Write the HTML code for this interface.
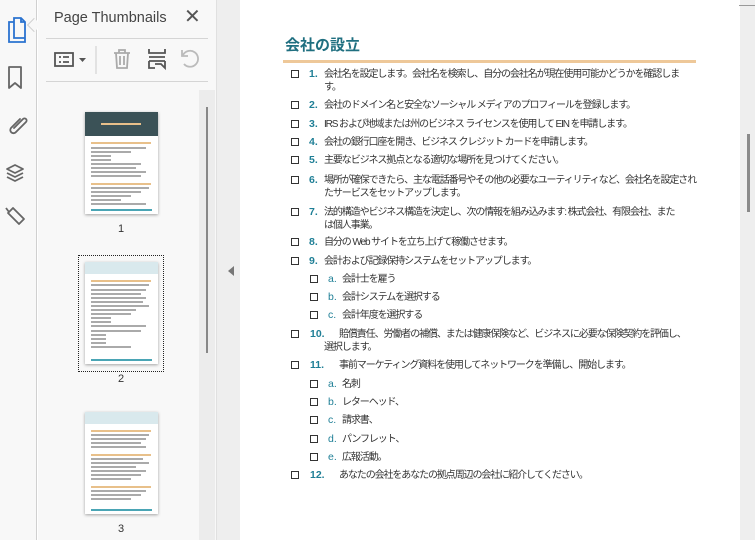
<!DOCTYPE html>
<html><head><meta charset="utf-8"><style>
*{margin:0;padding:0;box-sizing:border-box}
body{width:755px;height:540px;overflow:hidden;background:#fff;font-family:"Liberation Sans","Noto Sans CJK JP",sans-serif;position:relative}
.abs{position:absolute}
.bar{left:0;top:0;width:37px;height:540px;background:#f8f8f8;border-right:1px solid #d0d0d0}
.panel{left:38px;top:0;width:178px;height:540px;background:#f8f8f8}
.gap{left:216px;top:0;width:24px;height:540px;background:#eeeeee;border-left:1px solid #e0e0e0}
.rs{left:740px;top:0;width:15px;height:540px;background:#eeeeee}
.t{position:absolute;font-size:10px;letter-spacing:-1.1px;color:#333;white-space:nowrap;line-height:13px}
.n{position:absolute;font-size:10.5px;color:#1f7f96;font-weight:bold;line-height:13px}
.l{position:absolute;font-size:10.5px;color:#1f7f96;line-height:13px}
.b{position:absolute;width:8px;height:8px;border:1.5px solid #333}
.th{position:absolute;left:85px;width:73px;height:102px;background:#fff;box-shadow:0 1px 3px rgba(0,0,0,.35)}
.th i{position:absolute;left:6px;height:1.5px;background:#aaa}
</style></head><body>
<div class="abs bar"></div>
<div class="abs panel"></div>
<div class="abs gap"></div>
<div class="abs rs"></div>
<div class="abs" style="left:747px;top:134px;width:3px;height:78px;background:#8a8a8a"></div>
<div class="abs" style="left:739px;top:5px;width:16px;height:1px;background:#999"></div>

<svg class="abs" style="left:0;top:0" width="37" height="250" viewBox="0 0 37 250" fill="none" stroke-width="1.8">
<path d="M9 22h5v16h11v4H9z M14 18h7l4 4v16H14z" stroke="#2b73d0" fill="none"/>
<path d="M21 18v4h4" stroke="#2b73d0"/>
<path d="M9 67V88l6-5 6 5V67z" stroke="#666" stroke-linejoin="round"/>
<path d="M20 119l-9 9a3 3 0 0 0 5 4l10-10a2 2 0 0 0-3-3l-9 9" stroke="#666" stroke-linecap="round"/>
<path d="M15 165l-8 4 8 4 8-4z M7 173l8 4 8-4 M7 177l8 4 8-4" stroke="#666" stroke-linejoin="round"/>
<path d="M9 212l4-4 11 11-5 5-11-11z M6 208l3 4" stroke="#666" stroke-linejoin="round"/>
</svg>
<div class="abs" style="left:29px;top:20px;width:10px;height:10px;background:#f8f8f8;border-left:1px solid #d0d0d0;border-bottom:1px solid #d0d0d0;transform:rotate(45deg)"></div>

<div class="abs" style="left:54px;top:9px;font-size:14.5px;color:#444;line-height:18px;white-space:nowrap">Page Thumbnails</div>
<div class="abs" style="left:184px;top:6px;font-size:20px;color:#555;line-height:22px">✕</div>
<div class="abs" style="left:46px;top:38px;width:162px;height:1px;background:#d5d5d5"></div>
<div class="abs" style="left:46px;top:81px;width:162px;height:1px;background:#d5d5d5"></div>
<svg class="abs" style="left:50px;top:45px" width="160" height="30" fill="none" stroke-width="1.8">
<rect x="5" y="8" width="18" height="13" stroke="#555"/>
<path d="M9 12h2M9 17h2M13 12h6M13 17h6" stroke="#555"/>
<path d="M29 13h7l-3.5 4z" fill="#555"/>
<path d="M46 1v28" stroke="#ccc" stroke-width="1"/>
<path d="M64 8h16M69 8V5h6v3M66 8l1 15h10l1-15M70 11v9M74 11v9" stroke="#aaa"/>
<path d="M99 4v4h16V4M99 12h16M99 16h16M99 16v7h6M115 16v7l-4-4h-6" stroke="#555"/>
<path d="M134 19a8 8 0 1 0-1-9M132 5v6h6" stroke="#bbb"/>
</svg>
<div class="abs" style="left:199px;top:90px;width:16px;height:450px;background:#ececec"></div>
<div class="abs" style="left:206px;top:107px;width:2px;height:246px;background:#888"></div>
<svg class="abs" style="left:226px;top:265px" width="10" height="12"><path d="M8 1v10L2 6z" fill="#777"/></svg>

<div class="th" style="top:112px">
<div class="abs" style="left:0;top:0;width:73px;height:24px;background:#3b5257"></div>
<div class="abs" style="left:16px;top:11px;width:40px;height:1.5px;background:#e8c08a"></div>
<i style="top:30px;width:60px;background:#e8c08a"></i><i style="top:35px;width:55px"></i><i style="top:39px;width:40px"></i><i style="top:43px;width:20px"></i><i style="top:47px;width:20px"></i><i style="top:51px;width:50px"></i><i style="top:55px;width:45px"></i><i style="top:59px;width:55px"></i><i style="top:63px;width:50px"></i>
<i style="top:71px;width:60px;background:#e8c08a"></i><i style="top:75px;width:58px"></i><i style="top:79px;width:50px"></i><i style="top:83px;width:40px"></i><i style="top:87px;width:30px"></i><i style="top:91px;width:55px"></i>
<i style="top:97px;width:61px;background:#4aa5b5"></i>
</div>
<div class="abs" style="left:118px;top:223px;font-size:11px;color:#333">1</div>
<div class="abs" style="left:78px;top:255px;width:86px;height:117px;border:1px dotted #222"></div>
<div class="th" style="top:262px">
<div class="abs" style="left:0;top:0;width:73px;height:12px;background:#d9e9ed"></div>
<i style="top:18px;width:60px;background:#e8c08a"></i><i style="top:22px;width:58px"></i><i style="top:27px;width:55px"></i><i style="top:31px;width:50px"></i><i style="top:35px;width:55px"></i><i style="top:39px;width:52px"></i><i style="top:43px;width:58px"></i><i style="top:47px;width:45px"></i><i style="top:51px;width:40px"></i><i style="top:55px;width:20px"></i><i style="top:59px;width:20px"></i><i style="top:63px;width:55px"></i><i style="top:68px;width:50px"></i><i style="top:72px;width:15px"></i><i style="top:76px;width:15px"></i><i style="top:80px;width:15px"></i><i style="top:84px;width:40px"></i>
<i style="top:97px;width:61px;background:#4aa5b5"></i>
</div>
<div class="abs" style="left:118px;top:373px;font-size:11px;color:#333">2</div>
<div class="th" style="top:412px">
<div class="abs" style="left:0;top:0;width:73px;height:12px;background:#d9e9ed"></div>
<i style="top:18px;width:60px;background:#e8c08a"></i><i style="top:22px;width:58px"></i><i style="top:26px;width:55px"></i><i style="top:30px;width:50px"></i><i style="top:34px;width:55px"></i><i style="top:42px;width:60px;background:#e8c08a"></i><i style="top:46px;width:52px"></i><i style="top:50px;width:58px"></i><i style="top:54px;width:45px"></i><i style="top:58px;width:55px"></i><i style="top:62px;width:50px"></i><i style="top:66px;width:40px"></i><i style="top:74px;width:60px;background:#e8c08a"></i><i style="top:78px;width:55px"></i><i style="top:82px;width:50px"></i><i style="top:86px;width:40px"></i>
<i style="top:97px;width:61px;background:#4aa5b5"></i>
</div>
<div class="abs" style="left:118px;top:523px;font-size:11px;color:#333">3</div>

<div class="abs" style="left:285px;top:37px;font-size:15px;font-weight:bold;color:#1f6f80;line-height:18px;white-space:nowrap">会社の設立</div>
<div class="abs" style="left:283px;top:60px;width:413px;height:3px;background:#eec899"></div>

<div class="b" style="left:291px;top:70px"></div><div class="n" style="left:309px;top:68px">1.</div><div class="t" style="left:324px;top:68px">会社名を設定します。会社名を検索し、自分の会社名が現在使用可能かどうかを確認しま</div><div class="t" style="left:324px;top:81px">す。</div>
<div class="b" style="left:291px;top:101px"></div><div class="n" style="left:309px;top:99px">2.</div><div class="t" style="left:324px;top:99px">会社のドメイン名と安全なソーシャル メディアのプロフィールを登録します。</div>
<div class="b" style="left:291px;top:120px"></div><div class="n" style="left:309px;top:118px">3.</div><div class="t" style="left:324px;top:118px">IRS および地域または州のビジネス ライセンスを使用して EIN を申請します。</div>
<div class="b" style="left:291px;top:138px"></div><div class="n" style="left:309px;top:136px">4.</div><div class="t" style="left:324px;top:136px">会社の銀行口座を開き、ビジネス クレジット カードを申請します。</div>
<div class="b" style="left:291px;top:156px"></div><div class="n" style="left:309px;top:154px">5.</div><div class="t" style="left:324px;top:154px">主要なビジネス拠点となる適切な場所を見つけてください。</div>
<div class="b" style="left:291px;top:176px"></div><div class="n" style="left:309px;top:174px">6.</div><div class="t" style="left:324px;top:174px">場所が確保できたら、主な電話番号やその他の必要なユーティリティなど、会社名を設定され</div><div class="t" style="left:324px;top:187px">たサービスをセットアップします。</div>
<div class="b" style="left:291px;top:208px"></div><div class="n" style="left:309px;top:206px">7.</div><div class="t" style="left:324px;top:206px">法的構造やビジネス構造を決定し、次の情報を組み込みます: 株式会社、有限会社、また</div><div class="t" style="left:324px;top:219px">は個人事業。</div>
<div class="b" style="left:291px;top:238px"></div><div class="n" style="left:309px;top:236px">8.</div><div class="t" style="left:324px;top:236px">自分の Web サイトを立ち上げて稼働させます。</div>
<div class="b" style="left:291px;top:257px"></div><div class="n" style="left:309px;top:255px">9.</div><div class="t" style="left:324px;top:255px">会計および記録保持システムをセットアップします。</div>
<div class="b" style="left:310px;top:275px"></div><div class="l" style="left:328px;top:273px">a.</div><div class="t" style="left:342px;top:273px">会計士を雇う</div>
<div class="b" style="left:310px;top:293px"></div><div class="l" style="left:328px;top:291px">b.</div><div class="t" style="left:342px;top:291px">会計システムを選択する</div>
<div class="b" style="left:310px;top:311px"></div><div class="l" style="left:328px;top:309px">c.</div><div class="t" style="left:342px;top:309px">会計年度を選択する</div>
<div class="b" style="left:291px;top:330px"></div><div class="n" style="left:310px;top:328px">10.</div><div class="t" style="left:339px;top:328px">賠償責任、労働者の補償、または健康保険など、ビジネスに必要な保険契約を評価し、</div><div class="t" style="left:324px;top:341px">選択します。</div>
<div class="b" style="left:291px;top:361px"></div><div class="n" style="left:310px;top:359px">11.</div><div class="t" style="left:339px;top:359px">事前マーケティング資料を使用してネットワークを準備し、開始します。</div>
<div class="b" style="left:310px;top:380px"></div><div class="l" style="left:328px;top:378px">a.</div><div class="t" style="left:342px;top:378px">名刺</div>
<div class="b" style="left:310px;top:398px"></div><div class="l" style="left:328px;top:396px">b.</div><div class="t" style="left:342px;top:396px">レターヘッド、</div>
<div class="b" style="left:310px;top:416px"></div><div class="l" style="left:328px;top:414px">c.</div><div class="t" style="left:342px;top:414px">請求書、</div>
<div class="b" style="left:310px;top:435px"></div><div class="l" style="left:328px;top:433px">d.</div><div class="t" style="left:342px;top:433px">パンフレット、</div>
<div class="b" style="left:310px;top:453px"></div><div class="l" style="left:328px;top:451px">e.</div><div class="t" style="left:342px;top:451px">広報活動。</div>
<div class="b" style="left:291px;top:471px"></div><div class="n" style="left:310px;top:469px">12.</div><div class="t" style="left:339px;top:469px">あなたの会社をあなたの拠点周辺の会社に紹介してください。</div>
</body></html>
